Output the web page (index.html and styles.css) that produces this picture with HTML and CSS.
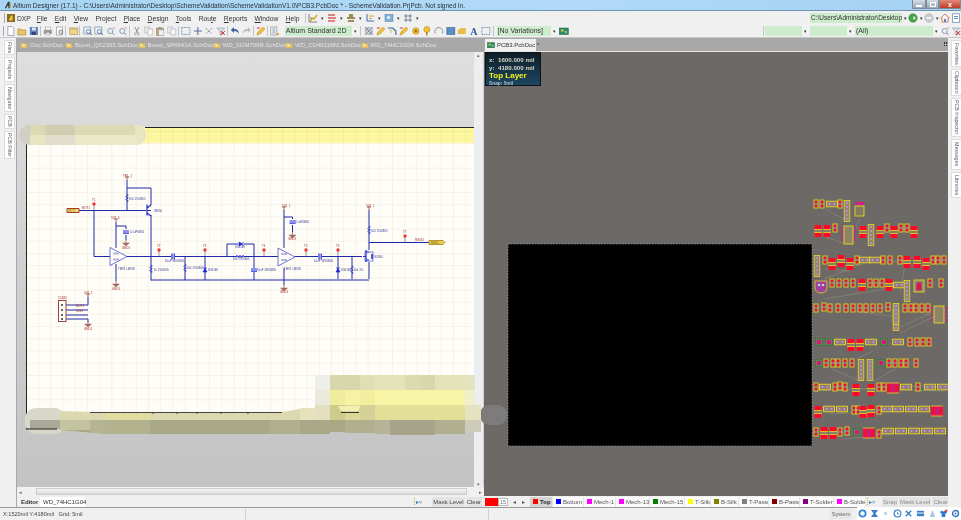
FILE: index.html
```html
<!DOCTYPE html>
<html lang="en">

<head>
  <meta charset="UTF-8">
  <meta name="viewport" content="width=device-width, initial-scale=1.0">
  <title>Altium Designer</title>
  <link rel="stylesheet" href="styles.css">
</head>

<body>
  <svg class="sprites" width="0" height="0">
    <defs>
      <!-- toolbar icons, 10x10 -->
      <symbol id="i-doc" viewBox="0 0 10 10"><path d="M2 .5h4l2 2v7H2z" fill="#fff" stroke="#8a9bb0" stroke-width=".8"/></symbol>
      <symbol id="i-open" viewBox="0 0 10 10"><path d="M1 3h3l1 1h4v5H1z" fill="#e9c46a" stroke="#a5822c" stroke-width=".6"/></symbol>
      <symbol id="i-save" viewBox="0 0 10 10"><rect x="1" y="1" width="8" height="8" fill="#5a7fb5"/><rect x="3" y="1.5" width="4" height="3" fill="#dfe8f3"/><rect x="3" y="6" width="4" height="3" fill="#2d4a78"/></symbol>
      <symbol id="i-print" viewBox="0 0 10 10"><rect x="2.5" y="1" width="5" height="3" fill="#fff" stroke="#888" stroke-width=".5"/><rect x="1" y="4" width="8" height="4" fill="#9a9a9a"/><rect x="3" y="6.5" width="4" height="2.5" fill="#eee" stroke="#888" stroke-width=".4"/></symbol>
      <symbol id="i-prev" viewBox="0 0 10 10"><rect x="1.5" y="1" width="6" height="8" fill="#fff" stroke="#888" stroke-width=".6"/><circle cx="6" cy="6" r="2" fill="#cfe3f7" stroke="#456" stroke-width=".6"/></symbol>
      <symbol id="i-folder" viewBox="0 0 10 10"><rect x="1" y="2" width="8" height="6.5" fill="#f2d68a" stroke="#9c8a55" stroke-width=".6"/><rect x="1" y="2" width="8" height="1.6" fill="#c9b578"/></symbol>
      <symbol id="i-zoom" viewBox="0 0 10 10"><rect x="1" y="1" width="7" height="7" fill="#e8f0fa" stroke="#7c8da5" stroke-width=".7"/><circle cx="5.5" cy="5.5" r="2" fill="none" stroke="#4b6a94" stroke-width=".7"/><path d="M7 7l2 2" stroke="#4b6a94"/></symbol>
      <symbol id="i-lens" viewBox="0 0 10 10"><circle cx="4.5" cy="5" r="2.6" fill="#e6eef7" stroke="#7c8da5" stroke-width=".8"/><path d="M6.5 7l2 2" stroke="#7c8da5"/><path d="M7 1l2 2" stroke="#c66" stroke-width=".7"/></symbol>
      <symbol id="i-cut" viewBox="0 0 10 10"><path d="M3 1l3 6M7 1L4 7" stroke="#8a94a3" fill="none"/><circle cx="3.4" cy="8" r="1" fill="none" stroke="#8a94a3" stroke-width=".6"/><circle cx="6.6" cy="8" r="1" fill="none" stroke="#8a94a3" stroke-width=".6"/></symbol>
      <symbol id="i-copy" viewBox="0 0 10 10"><rect x="1" y="1" width="5" height="6" fill="#eee" stroke="#aaa" stroke-width=".6"/><rect x="4" y="3" width="5" height="6" fill="#f7f7f7" stroke="#aaa" stroke-width=".6"/></symbol>
      <symbol id="i-paste" viewBox="0 0 10 10"><rect x="1.5" y="2" width="7" height="7.5" fill="#c4a877" stroke="#8d7a55" stroke-width=".5"/><rect x="3.5" y="1" width="3" height="2" fill="#999"/><rect x="4" y="4" width="5" height="5.5" fill="#eef2f8" stroke="#8997ac" stroke-width=".4"/></symbol>
      <symbol id="i-select" viewBox="0 0 10 10"><rect x="1" y="1.5" width="8" height="7" fill="none" stroke="#5b7da8" stroke-width=".8" stroke-dasharray="1.2 .6"/></symbol>
      <symbol id="i-move" viewBox="0 0 10 10"><path d="M5 1v8M1 5h8" stroke="#4d6f9c" fill="none"/></symbol>
      <symbol id="i-dashx" viewBox="0 0 10 10"><path d="M2 2l6 6M8 2L2 8" stroke="#7f8da0" stroke-dasharray="1.4 .7" fill="none"/></symbol>
      <symbol id="i-clear" viewBox="0 0 10 10"><path d="M1 2l8 0-3 3v4H4V5z" fill="#d7dfe9" stroke="#7a8899" stroke-width=".5"/><path d="M5 5l4 4M9 5L5 9" stroke="#c22" stroke-width="1"/></symbol>
      <symbol id="i-undo" viewBox="0 0 10 10"><path d="M1 4l3-3v2c3 0 5 1 5 5-1-2-2-3-5-3v2z" fill="#3d64a1"/></symbol>
      <symbol id="i-redo" viewBox="0 0 10 10"><path d="M9 4L6 1v2C3 3 1 4 1 8c1-2 2-3 5-3v2z" fill="#b9c0c9"/></symbol>
      <symbol id="i-pen" viewBox="0 0 10 10"><path d="M1 9l1-3 5-5 2 2-5 5z" fill="#f2c230" stroke="#a8801a" stroke-width=".5"/><path d="M1 2h3" stroke="#c33"/></symbol>
      <symbol id="i-chip" viewBox="0 0 10 10"><rect x="1" y="1" width="6" height="8" fill="#fff" stroke="#777" stroke-width=".6"/><path d="M2.500 3h3M2.500 5h3M2.500 7h3" stroke="#345d96" stroke-width=".7"/><path d="M7 7h2v2H7z" fill="#d9a520"/></symbol>
      <symbol id="i-hatch" viewBox="0 0 10 10"><rect x="1" y="1" width="8" height="8" fill="#c6ccd6"/><path d="M1 5l4-4M1 9l8-8M5 9l4-4M1 1l8 8" stroke="#5d6b80" stroke-width=".6"/></symbol>
      <symbol id="i-route" viewBox="0 0 10 10"><path d="M1 2h5l3 3v4" stroke="#2f6fb3" stroke-width="1.2" fill="none"/><path d="M4 2v5" stroke="#e4b72d" stroke-width="1"/></symbol>
      <symbol id="i-via" viewBox="0 0 10 10"><circle cx="5" cy="5" r="3.200" fill="#f0bb26" stroke="#a9801d" stroke-width=".5"/><circle cx="5" cy="5" r="1.200" fill="#8c6a18"/></symbol>
      <symbol id="i-pin" viewBox="0 0 10 10"><circle cx="5" cy="3.500" r="3" fill="#f0c12e" stroke="#a9801d" stroke-width=".5"/><rect x="4.300" y="6" width="1.400" height="3.500" fill="#a9801d"/></symbol>
      <symbol id="i-arc" viewBox="0 0 10 10"><path d="M1.500 7.500a4 4 0 1 1 7 0" fill="none" stroke="#7d8794" stroke-width=".9"/></symbol>
      <symbol id="i-fill" viewBox="0 0 10 10"><rect x="1" y="1.500" width="8" height="7" fill="#5c8cc4" stroke="#3c5f8b" stroke-width=".6"/></symbol>
      <symbol id="i-poly" viewBox="0 0 10 10"><path d="M1 8V4l3-2h5v6z" fill="#e8bd4a"/></symbol>
      <symbol id="i-chart" viewBox="0 0 10 10"><path d="M1 1v8h8" stroke="#555" fill="none" stroke-width=".7"/><path d="M2 8l3-3 1 1 3-4" stroke="#d9a11a" stroke-width="1.300" fill="none"/><path d="M2 4l2 2" stroke="#3d9a3d"/></symbol>
      <symbol id="i-bars" viewBox="0 0 10 10"><path d="M1 2h7M1 5h8M1 8h7" stroke="#d7625e" stroke-width="1.400"/></symbol>
      <symbol id="i-stack" viewBox="0 0 10 10"><path d="M3 1h4v3h2v2H1V4h2zM2 7h6v2H2z" fill="#9c8b55"/></symbol>
      <symbol id="i-angle" viewBox="0 0 10 10"><path d="M2 1v7h7" stroke="#3d6ea8" stroke-width="1" fill="none"/><path d="M4 3h5" stroke="#e3a72a"/><path d="M4 5.500h3" stroke="#d96"/></symbol>
      <symbol id="i-box" viewBox="0 0 10 10"><rect x="1" y="1.500" width="8" height="7" fill="#7fb2dc" stroke="#4d7ba6" stroke-width=".5"/><rect x="3" y="3.500" width="3" height="2" fill="#fff"/></symbol>
      <symbol id="i-grid" viewBox="0 0 10 10"><path d="M3 1v8M7 1v8M1 3h8M1 7h8" stroke="#6b7b90" stroke-width=".9"/></symbol>
      <symbol id="i-board" viewBox="0 0 10 10"><rect x=".5" y="2" width="9" height="6.500" fill="#2c8a5f" stroke="#1c5f40" stroke-width=".5"/><rect x="2" y="3.500" width="3" height="2" fill="#d7c24a"/><rect x="6" y="5" width="2" height="2" fill="#8fd0ad"/></symbol>
      <symbol id="i-go" viewBox="0 0 10 10"><circle cx="5" cy="5" r="4.200" fill="#46a546" stroke="#2c7a2c" stroke-width=".5"/><path d="M2.500 5h3V3l2.200 2-2.200 2V5" fill="#fff"/></symbol>
      <symbol id="i-stop" viewBox="0 0 10 10"><circle cx="5" cy="5" r="4.200" fill="#c9cdd2" stroke="#9aa0a8" stroke-width=".5"/><rect x="2.500" y="4" width="5" height="2" fill="#eef0f2"/></symbol>
      <symbol id="i-home" viewBox="0 0 10 10"><path d="M5 1L.8 5H2v4h6V5h1.200z" fill="#f5f5f5" stroke="#d2603a" stroke-width=".8"/><rect x="4" y="6" width="2" height="3" fill="#4f86c6"/></symbol>
      <symbol id="i-page" viewBox="0 0 10 10"><rect x="1.500" y=".8" width="7" height="8.500" fill="#fff" stroke="#5b87b8" stroke-width=".7"/><path d="M3 3.500h4M3 5.500h4" stroke="#4577ad" stroke-width=".8"/></symbol>
      <symbol id="i-sch" viewBox="0 0 10 10"><path d="M1 2.500h3l1 1h4v5H1z" fill="#e8c45a"/><rect x="3" y="4.500" width="3" height="2" fill="#fff4c4"/></symbol>

      <!-- schematic parts -->
      <g id="probe"><path d="M0 0v6" stroke="#8a7a88" stroke-width=".8"/><circle cx="0" cy="0" r="1.700" fill="#e8383a"/></g>
      <g id="gnd"><path d="M0-3V0" stroke="#9c5a50" stroke-width=".8"/><path d="M-3.500 0h7L0 3z" fill="#a86a60" stroke="#8c5a50" stroke-width=".4"/></g>
      <path id="pwr" d="M0 2v-3M-2-1h4" stroke="#a0564c" stroke-width=".9" fill="none"/>
      <path id="resv" d="M0-4l1.300 1-2.600 1.500 2.600 1.500-2.600 1.500 2.600 1.500-1.300 1" stroke="#1c28b0" stroke-width=".8" fill="#fffdf8"/>
      <path id="resh" d="M-4 0l1-1.300 1.500 2.600 1.500-2.600 1.500 2.600 1.500-2.600 1 1.300" stroke="#1c28b0" stroke-width=".8" fill="#fffdf8"/>
      <g id="capv"><rect x="-3" y="-2" width="6" height="4" fill="#fffdf8"/><path d="M-3-1h6M-3 1.200h6" stroke="#1c28e0" stroke-width="1.200"/></g>
      <g id="caph"><rect x="-2" y="-3" width="4" height="6" fill="#fffdf8"/><path d="M-1-3v6M1.200-3v6" stroke="#1c28e0" stroke-width="1.200"/></g>
      <path id="diodev" d="M-2 2h4L0-1.500zM-2-2h4" fill="#1c28d0" stroke="#1c28d0" stroke-width=".7"/>
      <path id="diodeh" d="M-2-2v4L1.500 0zM2-2v4" fill="#1c28d0" stroke="#1c28d0" stroke-width=".7"/>
      <g id="opamp"><path d="M0 0L17 9 0 18z" fill="#fffdf8" stroke="#4a50d0" stroke-width=".8"/><rect x="3" y="5" width="6" height="2" fill="#b4b4dc"/><rect x="3" y="11" width="6" height="2" fill="#b4b4dc"/></g>

      <!-- footprints -->
      <g id="r"><rect x="-2" y="-4" width="4" height="8" fill="none" stroke="#e8d820" stroke-width=".9"/><rect x="-1.300" y="-3.300" width="2.600" height="2.200" fill="#f01030"/><rect x="-1.300" y="1.100" width="2.600" height="2.200" fill="#f01030"/><rect x="-1" y="-1" width="2" height="2" fill="#b060a0"/></g>
      <g id="big"><rect x="-4" y="-6" width="8" height="12" fill="#858268"/><rect x="-3.500" y="-6" width="7" height="4.500" fill="#fa0a28"/><rect x="-3.500" y="1.500" width="7" height="4.500" fill="#fa0a28"/><path d="M-4-1.500h8M-4 1.500h8" stroke="#e8d820" stroke-width=".8"/></g>
      <g id="wide"><rect x="-6" y="-5" width="12" height="10" fill="#f01040"/><rect x="-1.500" y="-5" width="3" height="10" fill="#c02080"/><path d="M-6-5h12M-6 5h12" stroke="#e8d820" stroke-width=".8"/></g>
      <g id="h"><rect x="-5.500" y="-2.800" width="11" height="5.600" fill="#8f7f78" stroke="#e8d820" stroke-width=".9"/><circle cx="-2.500" cy="0" r="1.100" fill="#9cc" stroke="#e040c0" stroke-width=".4"/><circle cx="2.500" cy="0" r="1.100" fill="#9cc" stroke="#e040c0" stroke-width=".4"/></g>
      <g id="g"><rect x="-3.500" y="-3.500" width="7" height="7" fill="#5a8a50" stroke="#2a7030" stroke-width=".5"/><rect x="-2" y="-2" width="4" height="4" fill="#e01080"/></g>
      <g id="s"><rect x="-2.800" y="-10.500" width="5.600" height="21" fill="#8f8a78" stroke="#e8d820" stroke-width=".8"/><circle cy="-8" r="1.100" fill="#a8c8c8" stroke="#d040b0" stroke-width=".4"/><circle cy="-4" r="1.100" fill="#a8c8c8" stroke="#d040b0" stroke-width=".4"/><circle cy="0" r="1.100" fill="#a8c8c8" stroke="#d040b0" stroke-width=".4"/><circle cy="4" r="1.100" fill="#a8c8c8" stroke="#d040b0" stroke-width=".4"/><circle cy="8" r="1.100" fill="#a8c8c8" stroke="#d040b0" stroke-width=".4"/></g>

      <pattern id="sheet-grid" x="26" y="131" width="12.200" height="12.200" patternUnits="userSpaceOnUse">
        <path d="M12.200 0H0V12.200" fill="none" stroke="#ebe5d4" stroke-width=".9"/>
      </pattern>
      <pattern id="band-grid" x="26" y="131" width="12.200" height="12.200" patternUnits="userSpaceOnUse">
        <path d="M12.200 0H0V12.200" fill="none" stroke="#ece486" stroke-width=".9"/>
      </pattern>
    </defs>
  </svg>

  <div class="app">
    <header class="titlebar">
      <svg class="title-logo" viewBox="0 0 10 10"><path d="M1 9L5 1h2v8H5.500V6H4L3 9z" fill="#333"/><path d="M8 2v7" stroke="#c79a1e"/></svg>
      <span class="title-text">Altium Designer (17.1) - C:\Users\Administrator\Desktop\SchemeValidation\SchemeValidationV1.0\PCB3.PcbDoc * - SchemeValidation.PrjPcb. Not signed in.</span>
      <div class="win-buttons">
        <span class="win-btn"><i class="win-min"></i></span>
        <span class="win-btn win-restore"><i class="win-max"></i></span>
        <span class="win-btn win-close">x</span>
      </div>
    </header>

    <nav class="menubar">
      <span class="grip"></span>
      <svg class="dxp-logo" viewBox="0 0 10 10"><rect width="10" height="10" fill="#8a6a1e"/><path d="M2 8L5 2h2v6" fill="#f0c43a"/></svg>
      <span class="menu-item dxp">DXP</span>
      <span class="menu-item"><u>F</u>ile</span>
      <span class="menu-item"><u>E</u>dit</span>
      <span class="menu-item"><u>V</u>iew</span>
      <span class="menu-item">Pro<u>j</u>ect</span>
      <span class="menu-item"><u>P</u>lace</span>
      <span class="menu-item"><u>D</u>esign</span>
      <span class="menu-item"><u>T</u>ools</span>
      <span class="menu-item">Rou<u>t</u>e</span>
      <span class="menu-item"><u>R</u>eports</span>
      <span class="menu-item"><u>W</u>indow</span>
      <span class="menu-item"><u>H</u>elp</span>
      <div class="view-tools">
        <span class="sep"></span>
        <svg class="ico"><use href="#i-chart"/></svg><span class="drop">▾</span>
        <svg class="ico"><use href="#i-bars"/></svg><span class="drop">▾</span>
        <svg class="ico"><use href="#i-stack"/></svg><span class="drop">▾</span>
        <svg class="ico"><use href="#i-angle"/></svg><span class="drop">▾</span>
        <svg class="ico"><use href="#i-box"/></svg><span class="drop">▾</span>
        <svg class="ico"><use href="#i-grid"/></svg><span class="drop">▾</span>
      </div>
      <div class="nav-tools">
        <span class="combo combo-path">C:\Users\Administrator\Desktop</span>
        <span class="drop">▾</span>
        <svg class="ico"><use href="#i-go"/></svg><span class="drop">▾</span>
        <svg class="ico"><use href="#i-stop"/></svg><span class="drop">▾</span>
        <svg class="ico"><use href="#i-home"/></svg>
        <svg class="ico ico-last"><use href="#i-page"/></svg>
      </div>
    </nav>

    <div class="toolbar">
      <span class="grip"></span>
      <svg class="ico"><use href="#i-doc"/></svg>
      <svg class="ico"><use href="#i-open"/></svg>
      <svg class="ico"><use href="#i-save"/></svg>
      <span class="sep"></span>
      <svg class="ico"><use href="#i-print"/></svg>
      <svg class="ico"><use href="#i-prev"/></svg>
      <span class="sep"></span>
      <svg class="ico"><use href="#i-folder"/></svg>
      <span class="sep"></span>
      <svg class="ico"><use href="#i-zoom"/></svg>
      <svg class="ico"><use href="#i-zoom"/></svg>
      <svg class="ico"><use href="#i-lens"/></svg>
      <svg class="ico"><use href="#i-lens"/></svg>
      <span class="sep"></span>
      <svg class="ico"><use href="#i-cut"/></svg>
      <svg class="ico"><use href="#i-copy"/></svg>
      <svg class="ico"><use href="#i-paste"/></svg>
      <svg class="ico"><use href="#i-copy"/></svg>
      <span class="sep"></span>
      <svg class="ico"><use href="#i-select"/></svg>
      <svg class="ico"><use href="#i-move"/></svg>
      <svg class="ico"><use href="#i-dashx"/></svg>
      <svg class="ico"><use href="#i-clear"/></svg>
      <span class="sep"></span>
      <svg class="ico"><use href="#i-undo"/></svg>
      <svg class="ico"><use href="#i-redo"/></svg>
      <span class="sep"></span>
      <svg class="ico"><use href="#i-pen"/></svg>
      <span class="sep"></span>
      <svg class="ico"><use href="#i-chip"/></svg>
      <span class="combo combo-view">Altium Standard 2D</span>
      <span class="combo-arrow">▾</span>
      <span class="sep sep-wide"></span>
      <svg class="ico"><use href="#i-hatch"/></svg>
      <svg class="ico"><use href="#i-pen"/></svg>
      <svg class="ico"><use href="#i-route"/></svg>
      <svg class="ico"><use href="#i-pen"/></svg>
      <svg class="ico"><use href="#i-via"/></svg>
      <svg class="ico"><use href="#i-pin"/></svg>
      <svg class="ico"><use href="#i-arc"/></svg>
      <svg class="ico"><use href="#i-fill"/></svg>
      <svg class="ico"><use href="#i-poly"/></svg>
      <span class="glyph-a">A</span>
      <svg class="ico"><use href="#i-select"/></svg>
      <span class="sep sep-wide"></span>
      <span class="combo combo-variant">[No Variations]</span>
      <span class="combo-arrow">▾</span>
      <svg class="ico"><use href="#i-board"/></svg>
      <div class="filter-tools">
        <span class="sep"></span>
        <span class="combo combo-filter"></span><span class="combo-arrow combo-gap">▾</span>
        <span class="combo combo-filter"></span><span class="combo-arrow combo-gap">▾</span>
        <span class="combo combo-all">(All)</span><span class="combo-arrow">▾</span>
        <svg class="ico"><use href="#i-lens"/></svg>
        <svg class="ico"><use href="#i-clear"/></svg>
      </div>
    </div>

    <main class="workspace">
      <aside class="side-tabs side-left">
        <span class="side-tab tab-files">Files</span>
        <span class="side-tab tab-projects">Projects</span>
        <span class="side-tab tab-nav">Navigator</span>
        <span class="side-tab tab-pcb">PCB</span>
        <span class="side-tab tab-filter">PCB Filter</span>
      </aside>

      <section class="pane pane-sch">
        <div class="doc-tabs">
          <span class="doc-tab"><svg class="ico-sm"><use href="#i-sch"/></svg>Osc.SchDoc</span>
          <span class="doc-tab"><svg class="ico-sm"><use href="#i-sch"/></svg>Boost_QX2303.SchDoc</span>
          <span class="doc-tab"><svg class="ico-sm"><use href="#i-sch"/></svg>Boost_SP6641A.SchDoc</span>
          <span class="doc-tab"><svg class="ico-sm"><use href="#i-sch"/></svg>WD_SGM706R.SchDoc</span>
          <span class="doc-tab"><svg class="ico-sm"><use href="#i-sch"/></svg>WD_CD4011BM.SchDoc</span>
          <span class="doc-tab"><svg class="ico-sm"><use href="#i-sch"/></svg>WD_74HC1G04.SchDoc</span>
        </div>
        <div class="sch-body">
          <svg class="sch-canvas" viewBox="17 52 457 436">
            <rect x="26" y="127" width="448" height="16" fill="#fdf7a2"/>
            <rect x="26" y="127" width="448" height="16" fill="url(#band-grid)"/>
            <rect x="26" y="143" width="448" height="269" fill="#fffdf8"/>
            <rect x="26" y="143" width="448" height="269" fill="url(#sheet-grid)"/>
            <rect x="26" y="412" width="70" height="17" fill="#fffdf8"/>
            <path d="M145 127.500H474" stroke="#222" stroke-width="1"/>
            <path d="M26.500 143V429H57" stroke="#222" stroke-width="1" fill="none"/>

            <!-- wires -->
            <g class="wires">
              <path d="M79 210.500H146M94 210.500V256.500H110"/>
              <path d="M127 180V210.500M127 188H151V205M151 215V280.500"/>
              <path d="M116 222V248M116 226H126V229M126 235V240M116 264V281"/>
              <path d="M124 256.500H227M227 256.500V244H238M244 244H254V256.500M227 256.500H254"/>
              <path d="M151 280H369M185 256.500V280M205 256.500V280M254 256.500V280"/>
              <path d="M254 256.500H278"/>
              <path d="M284 210V248M284 217H292.500V219M292.500 225V232M284 268V285"/>
              <path d="M295 256.500H362M338 256.500V279M352 256.500V279"/>
              <path d="M369 210V250M369 262V279M369 242.500H429"/>
              <path d="M66 305H88V297M66 310H88M66 315H88M66 319H88V322"/>
            </g>

            <use href="#probe" x="94" y="204"/>
            <use href="#probe" x="159" y="250"/>
            <use href="#probe" x="205" y="250"/>
            <use href="#probe" x="264" y="250"/>
            <use href="#probe" x="306" y="250"/>
            <use href="#probe" x="338" y="250"/>
            <use href="#probe" x="405" y="236"/>

            <use href="#pwr" x="127" y="178"/>
            <use href="#pwr" x="116" y="220"/>
            <use href="#pwr" x="284" y="208"/>
            <use href="#pwr" x="369" y="208"/>
            <use href="#pwr" x="88" y="295"/>

            <use href="#gnd" x="126" y="243"/>
            <use href="#gnd" x="116" y="284"/>
            <use href="#gnd" x="292.500" y="235"/>
            <use href="#gnd" x="284" y="288"/>
            <use href="#gnd" x="88" y="324"/>

            <use href="#resv" x="127" y="198"/>
            <use href="#resv" x="151" y="269"/>
            <use href="#resv" x="185" y="268"/>
            <use href="#resv" x="352" y="270"/>
            <use href="#resv" x="369" y="230"/>
            <use href="#resh" x="240" y="256.500"/>
            <use href="#capv" x="126" y="232"/>
            <use href="#capv" x="254" y="270"/>
            <use href="#capv" x="292.500" y="222"/>
            <use href="#caph" x="173" y="256.500"/>
            <use href="#caph" x="320" y="256.500"/>
            <use href="#diodev" x="205" y="270"/>
            <use href="#diodev" x="338" y="270"/>
            <use href="#diodeh" x="241" y="244"/>

            <use href="#opamp" x="110" y="247.500"/>
            <use href="#opamp" x="278" y="248"/>

            <!-- transistor and mosfet -->
            <path d="M147 204.500v11M147 210.500H151M147 208L151 205M147 213L151 216" stroke="#1c28d0" stroke-width="1.200" fill="none"/>
            <path d="M366 250v12M363 256.500H366M366 252h3M366 260h3" stroke="#1c28d0" stroke-width="1.200" fill="none"/>
            <rect x="365" y="252" width="8" height="9" fill="none" stroke="#4a50d0" stroke-width=".7"/>
            <path d="M372 254v5" stroke="#1c28d0" stroke-width="1.500"/>

            <!-- ports and connector -->
            <path d="M67 208.500H79V212.500H67Z" fill="#efe06a" stroke="#a83a2a" stroke-width="1"/>
            <path d="M429 240.500H443L445 242.500 443 244.500H429Z" fill="#e8cd50" stroke="#b08a2a" stroke-width=".9"/>
            <rect x="58.500" y="300.500" width="7.500" height="21" fill="#fffdf8" stroke="#a0433a" stroke-width="1"/>
            <g fill="#333"><circle cx="62" cy="305" r="1"/><circle cx="62" cy="310" r="1"/><circle cx="62" cy="315" r="1"/><circle cx="62" cy="319" r="1"/></g>

            <!-- labels -->
            <g class="net-red">
              <text x="123" y="177">TR1_1</text>
              <text x="111" y="219">5V1_5</text>
              <text x="282" y="207">5V1_1</text>
              <text x="366" y="207">5V1_1</text>
              <text x="84" y="294">5V1_1</text>
              <text x="82" y="209">NOT1</text>
              <text x="415" y="241">NSIG1</text>
              <text x="92" y="201">T1</text>
              <text x="157" y="247">T2</text>
              <text x="203" y="247">T3</text>
              <text x="262" y="247">T4</text>
              <text x="304" y="247">T5</text>
              <text x="336" y="247">T6</text>
              <text x="403" y="233">T7</text>
              <text x="122" y="249">GND1</text>
              <text x="112" y="290">GND1</text>
              <text x="288" y="240">GND1</text>
              <text x="280" y="293">GND1</text>
              <text x="84" y="330">GND1</text>
              <text x="58" y="299">COM4</text>
              <text x="76" y="307">NOT1</text>
              <text x="76" y="312">SIG1</text>
            </g>
            <g class="net-blue">
              <text x="129" y="200">100 1%/0805</text>
              <text x="154" y="212">S8050</text>
              <text x="130" y="233">0.1uF/0805</text>
              <text x="118" y="270">TMV1 LM358</text>
              <text x="154" y="271">1k 1%/0805</text>
              <text x="165" y="262">10uF 16V/0805</text>
              <text x="187" y="269">10k 1%/0805</text>
              <text x="208" y="271">1N4148</text>
              <text x="235" y="248">1N4148</text>
              <text x="233" y="260">10k 1%/0805</text>
              <text x="257" y="271">10uF 16V/0805</text>
              <text x="295" y="223">0.1uF/0805</text>
              <text x="284" y="270">TMV1 LM358</text>
              <text x="314" y="262">10uF 16V/0805</text>
              <text x="341" y="271">1N4148</text>
              <text x="354" y="271">10k 1%</text>
              <text x="371" y="232">100 1%/0805</text>
              <text x="374" y="258">Si2300</text>
            </g>
            <text class="port-text" x="68.500" y="211.800">NOT1</text>
            <text class="port-text" x="431" y="243.800">NSIG1</text>
          </svg>
          <div class="scroll-v"><span class="arr">▴</span><span class="arr">▾</span></div>
        </div>
        <div class="scroll-h"><span class="arr">◂</span><span class="thumb"></span><span class="arr">▸</span></div>
        <div class="editor-bar">
          <span class="editor-label">Editor</span>
          <span class="editor-tab">WD_74HC1G04</span>
          <span class="bar-right">
            <span class="filter-icon">▸▿</span>
            <span class="bar-btn">Mask Level</span>
            <span class="bar-btn">Clear</span>
          </span>
        </div>
      </section>

      <section class="pane pane-pcb">
        <div class="doc-tabs doc-tabs-pcb">
          <span class="doc-tab doc-tab-on"><svg class="ico-sm"><use href="#i-board"/></svg>PCB3.PcbDoc *</span>
          <span class="pin-dots">⠿</span>
        </div>
        <div class="pcb-body">
          <svg class="pcb-canvas" viewBox="484 53 464 444">
            <rect x="508" y="245" width="304" height="202" fill="#000" stroke="#8a8a8a" stroke-width=".8" stroke-dasharray="1.500 1.500"/>

            <g class="ratsnest">
              <path d="M826 210L847 222M860 220L846 244M826 238L846 245M856 228L872 240M825 270L850 272M860 263L946 262M824 280L870 262"/>
              <path d="M855 312L896 318M900 328L940 310M900 334L945 312M824 300L885 290M905 265L900 295M911 310L945 322"/>
              <path d="M832 370L860 382M895 370L874 382M873 352L856 360M850 390L945 392M830 415L930 410M845 440L925 432M815 392L935 386"/>
            </g>

            <use href="#r" x="816" y="205"/><use href="#r" x="822" y="205"/><use href="#h" x="832" y="205"/><use href="#r" x="840" y="205"/><use href="#s" x="847" y="212"/>
            <rect x="855" y="207" width="9" height="10" fill="#7f7a60" stroke="#e8d820" stroke-width=".9"/><rect x="855" y="203" width="9" height="3" fill="#d0208a"/>

            <use href="#big" x="818" y="232"/><use href="#big" x="827" y="232"/><use href="#r" x="835" y="229"/>
            <rect x="844" y="227" width="9" height="18" fill="#8d8468" stroke="#e8d820" stroke-width=".9"/><path d="M843 229h-2M843 232h-2M843 235h-2M843 238h-2M843 241h-2M854 229h2M854 232h2M854 235h2M854 238h2M854 241h2" stroke="#e01090" stroke-width="1.500"/>
            <use href="#big" x="863" y="233"/><use href="#s" x="871" y="236"/><use href="#big" x="880" y="233"/><use href="#r" x="887" y="229"/><use href="#big" x="894" y="233"/><use href="#r" x="901" y="229"/><use href="#r" x="907" y="229"/><use href="#big" x="914" y="233"/>

            <use href="#s" x="817" y="267"/><use href="#r" x="825" y="261"/><use href="#big" x="832" y="265"/><use href="#big" x="841" y="262"/><use href="#big" x="850" y="265"/><use href="#r" x="857" y="261"/><use href="#h" x="865" y="261"/><use href="#h" x="875" y="261"/><use href="#r" x="883" y="261"/><use href="#r" x="890" y="261"/><use href="#r" x="900" y="261"/><use href="#big" x="907" y="263"/><use href="#big" x="917" y="263"/><use href="#big" x="926" y="265"/><use href="#r" x="933" y="261"/><use href="#r" x="938" y="261"/><use href="#r" x="944" y="261"/>

            <path d="M815 282h12v7a6 5 0 0 1-12 0z" fill="#a0409a" stroke="#e8d820" stroke-width=".8"/><circle cx="819" cy="286" r="1.300" fill="#bcd"/><circle cx="823" cy="286" r="1.300" fill="#bcd"/>
            <use href="#r" x="832" y="284"/><use href="#r" x="839" y="284"/><use href="#r" x="846" y="284"/><use href="#r" x="853" y="284"/><use href="#big" x="862" y="286"/><use href="#r" x="870" y="284"/><use href="#r" x="876" y="284"/><use href="#r" x="882" y="284"/><use href="#big" x="889" y="286"/><use href="#h" x="899" y="286"/><use href="#s" x="907" y="292"/>
            <rect x="914" y="281" width="10" height="12" fill="#8d8468" stroke="#e8d820" stroke-width=".9"/><rect x="917" y="284" width="4" height="7" fill="#f01040" stroke="#a02090" stroke-width=".7"/>
            <use href="#r" x="930" y="284"/><use href="#r" x="941" y="284"/>

            <use href="#r" x="816" y="309"/><use href="#r" x="824" y="308"/><use href="#r" x="830" y="309"/><use href="#r" x="838" y="309"/><use href="#r" x="846" y="309"/><use href="#r" x="853" y="309"/><use href="#r" x="860" y="309"/><use href="#r" x="866" y="309"/><use href="#r" x="873" y="309"/><use href="#r" x="880" y="309"/><use href="#r" x="888" y="308"/><use href="#s" x="896" y="321"/><use href="#s" x="896" y="315"/><use href="#r" x="905" y="309"/><use href="#r" x="911" y="309"/><use href="#r" x="916" y="309"/><use href="#r" x="922" y="309"/><use href="#r" x="928" y="309"/>
            <rect x="934" y="307" width="10" height="17" fill="#8d8468" stroke="#e8d820" stroke-width=".9"/><path d="M933 309h-2M933 313h-2M933 317h-2M933 321h-2M945 309h2M945 313h2M945 317h2M945 321h2" stroke="#e01090" stroke-width="1.500"/>

            <use href="#g" x="819" y="343"/><use href="#g" x="829" y="343"/><use href="#h" x="840" y="343"/><use href="#big" x="851" y="346"/><use href="#big" x="860" y="346"/><use href="#h" x="871" y="343"/><use href="#g" x="884" y="343"/><use href="#h" x="898" y="343"/><use href="#r" x="910" y="343"/><use href="#r" x="917" y="343"/><use href="#r" x="923" y="343"/><use href="#r" x="929" y="343"/>

            <use href="#g" x="819" y="364"/><use href="#r" x="826" y="364"/><use href="#r" x="833" y="364"/><use href="#r" x="838" y="364"/><use href="#r" x="845" y="364"/><use href="#r" x="852" y="364"/><use href="#s" x="861" y="371"/><use href="#s" x="870" y="371"/><use href="#g" x="881" y="364"/><use href="#r" x="889" y="364"/><use href="#r" x="895" y="364"/><use href="#r" x="901" y="364"/><use href="#r" x="906" y="364"/><use href="#r" x="916" y="364"/>

            <use href="#r" x="816" y="388"/><use href="#h" x="825" y="388"/><use href="#r" x="835" y="388"/><use href="#r" x="840" y="387"/><use href="#r" x="845" y="388"/><use href="#big" x="856" y="391"/><use href="#big" x="871" y="391"/><use href="#r" x="879" y="388"/><use href="#r" x="884" y="388"/><use href="#wide" x="893" y="389"/><use href="#h" x="906" y="388"/><use href="#r" x="918" y="388"/><use href="#h" x="930" y="388"/><use href="#h" x="943" y="388"/>

            <use href="#big" x="818" y="413"/><use href="#h" x="829" y="410"/><use href="#h" x="842" y="410"/><use href="#r" x="854" y="411"/><use href="#r" x="858" y="411"/><use href="#big" x="863" y="413"/><use href="#big" x="871" y="412"/><use href="#r" x="879" y="411"/><use href="#h" x="887" y="410"/><use href="#h" x="898" y="410"/><use href="#h" x="911" y="410"/><use href="#h" x="924" y="410"/><use href="#wide" x="937" y="412"/>

            <use href="#r" x="816" y="433"/><use href="#big" x="824" y="434"/><use href="#big" x="833" y="434"/><use href="#r" x="840" y="433"/><use href="#r" x="847" y="432"/><use href="#g" x="857" y="433"/><use href="#wide" x="869" y="434"/><use href="#r" x="879" y="435"/><use href="#h" x="888" y="432"/><use href="#h" x="901" y="432"/><use href="#h" x="914" y="432"/><use href="#h" x="927" y="432"/><use href="#h" x="940" y="432"/>
          </svg>
          <div class="readout">
            <div class="readout-xy">x: &nbsp;1600.000 mil</div>
            <div class="readout-xy">y: &nbsp;4180.000 mil</div>
            <div class="readout-layer">Top Layer</div>
            <div class="readout-snap">Snap: 5mil</div>
          </div>
        </div>
        <div class="layer-bar">
          <span class="layer-swatch"></span><span class="layer-count">15</span>
          <span class="layer-nav layer-nav-first">◂</span><span class="layer-nav">▸</span>
          <span class="layer-tab layer-tab-on lw-23"><i class="dot c-top"></i>Top</span>
          <span class="layer-tab lw-31"><i class="dot c-bottom"></i>Bottom</span>
          <span class="layer-tab lw-32"><i class="dot c-mech"></i>Mech-1</span>
          <span class="layer-tab lw-34"><i class="dot c-mech"></i>Mech-13</span>
          <span class="layer-tab lw-35"><i class="dot c-mech15"></i>Mech-15</span>
          <span class="layer-tab lw-26"><i class="dot c-tsilk"></i>T-Silk</span>
          <span class="layer-tab lw-28"><i class="dot c-bsilk"></i>B-Silk</span>
          <span class="layer-tab lw-30"><i class="dot c-tpaste"></i>T-Paste</span>
          <span class="layer-tab lw-31"><i class="dot c-bpaste"></i>B-Paste</span>
          <span class="layer-tab lw-34"><i class="dot c-tsolder"></i>T-Solder</span>
          <span class="layer-tab lw-32"><i class="dot c-mech"></i>B-Solde</span>
          <span class="filter-icon filter-icon-pcb">▸▿</span>
          <span class="bar-btn bar-btn-dim">Snap</span>
          <span class="bar-btn bar-btn-dim">Mask Level</span>
          <span class="bar-btn bar-btn-dim">Clear</span>
        </div>
      </section>

      <aside class="side-tabs side-right">
        <span class="side-tab tab-fav">Favorites</span>
        <span class="side-tab tab-clip">Clipboard</span>
        <span class="side-tab tab-insp">PCB Inspector</span>
        <span class="side-tab tab-msg">Messages</span>
        <span class="side-tab tab-lib">Libraries</span>
      </aside>

      <!-- pixelated patches lying over both panes -->
      <svg class="mosaic" viewBox="0 0 961 470">
        <g transform="translate(0 -38)">
          <rect x="19" y="125" width="40" height="20" rx="10" fill="#cfcfc6"/>
          <rect x="120" y="125" width="26" height="20" rx="9" fill="#e8e6c2"/>
          <rect x="30" y="125" width="15" height="10" fill="#d9d9b4"/><rect x="45" y="125" width="30" height="10" fill="#cfceb0"/><rect x="75" y="125" width="60" height="10" fill="#dadab4"/>
          <rect x="30" y="135" width="15" height="10" fill="#e8e6c0"/><rect x="45" y="135" width="30" height="10" fill="#e0decb"/><rect x="75" y="135" width="60" height="10" fill="#ebe8c7"/>

          <rect x="25" y="408" width="40" height="26" rx="11" fill="#d8d8ca"/>
          <path d="M60 411L90 412H282L300 409H330V434L262 434 105 434 60 430Z" fill="#dcd9b0"/>
          <rect x="30" y="420" width="30" height="9" fill="#a9a99a"/>
          <path d="M60 420H330V434H105L60 430Z" fill="#a9a888"/>
          <rect x="60" y="420" width="30" height="10" fill="#c4c3a0"/><rect x="90" y="420" width="15" height="13" fill="#b5b495"/>
          <rect x="105" y="413" width="45" height="7" fill="#e2dd9e"/><rect x="105" y="420" width="45" height="14" fill="#b2b28e"/>
          <rect x="270" y="420" width="30" height="14" fill="#b0af90"/><rect x="300" y="408" width="15" height="12" fill="#e6e3bc"/>
          <path d="M90 412.500H282M153 412v2M177 412v2M197 412v2M221 412v2M248 412v2" stroke="#333" stroke-width=".9" fill="none"/>
          <path d="M57 429H26" stroke="#222" stroke-width="1"/>

          <rect x="315" y="375" width="15" height="15" fill="#efefe9"/><rect x="330" y="375" width="30" height="15" fill="#d8d6ab"/><rect x="360" y="375" width="15" height="15" fill="#e0dfb3"/><rect x="375" y="375" width="30" height="15" fill="#e4e3ba"/><rect x="405" y="375" width="15" height="15" fill="#dcdbb0"/><rect x="420" y="375" width="15" height="15" fill="#d9d8ad"/><rect x="435" y="375" width="30" height="15" fill="#e3e2b8"/><rect x="465" y="375" width="10" height="15" fill="#e6e4c0"/>
          <rect x="315" y="390" width="15" height="15" fill="#ebe9dc"/><rect x="330" y="390" width="15" height="15" fill="#f1ec9c"/><rect x="345" y="390" width="15" height="15" fill="#f6f1a4"/><rect x="360" y="390" width="15" height="15" fill="#f3ee9e"/><rect x="375" y="390" width="90" height="15" fill="#f8f4a6"/><rect x="465" y="390" width="10" height="15" fill="#f0eecb"/>
          <rect x="480" y="405" width="27" height="20" rx="9" fill="#7e7c7a"/>
          <rect x="315" y="405" width="15" height="15" fill="#e3e0c0"/><rect x="330" y="405" width="15" height="15" fill="#cdcc8c"/><rect x="345" y="405" width="15" height="15" fill="#dcd898"/><rect x="360" y="405" width="15" height="15" fill="#d4d298"/><rect x="375" y="405" width="90" height="15" fill="#e2df98"/><rect x="465" y="405" width="16" height="15" fill="#e5e3bf"/>
          <rect x="330" y="420" width="15" height="12" fill="#a9a884"/><rect x="345" y="420" width="30" height="13" fill="#b0af90"/><rect x="375" y="420" width="15" height="14" fill="#b5b496"/><rect x="390" y="420" width="45" height="15" fill="#a6a58c"/><rect x="435" y="420" width="30" height="14" fill="#b0af8f"/><rect x="465" y="420" width="16" height="12" fill="#cccbb9"/>
          <path d="M338 406H360L358 411H341Z" fill="#f5f0b0"/>
          <path d="M341 412.500H359" stroke="#222" stroke-width=".9"/>
        </g>
      </svg>
    </main>

    <footer class="statusbar">
      <span class="status-pos">X:1520mil Y:4180mil &nbsp; Grid: 5mil</span>
      <span class="status-div status-div-1"></span>
      <span class="status-div status-div-2"></span>
      <span class="status-system">System</span>
      <div class="tray">
        <svg class="tray-ico" viewBox="0 0 10 10"><circle cx="5" cy="5" r="4.500" fill="#3a86d8"/><circle cx="5" cy="5" r="2.500" fill="#fff"/></svg>
        <svg class="tray-ico" viewBox="0 0 10 10"><path d="M1 1h8L6 5l3 4H1l3-4z" fill="#3d7fc4"/></svg>
        <svg class="tray-ico" viewBox="0 0 10 10"><circle cx="5" cy="5" r="2" fill="#bcd6ee"/></svg>
        <svg class="tray-ico" viewBox="0 0 10 10"><circle cx="5" cy="5" r="3.800" fill="none" stroke="#2f78c8" stroke-width="1.200"/><path d="M5 3v2.500h2" stroke="#2f78c8" fill="none" stroke-width=".9"/></svg>
        <svg class="tray-ico" viewBox="0 0 10 10"><path d="M2 2l6 6M8 2L2 8" stroke="#2f78c8" stroke-width="1.500"/></svg>
        <svg class="tray-ico" viewBox="0 0 10 10"><rect x="1" y="2" width="8" height="6" fill="#3d7fc4"/><path d="M1 4.500h8" stroke="#fff"/></svg>
        <svg class="tray-ico" viewBox="0 0 10 10"><path d="M5 1L2 9h6z" fill="#a8c4e0"/></svg>
        <svg class="tray-ico" viewBox="0 0 10 10"><path d="M1 3l3-1 1 1 1-1 3 1-1 2H7v4H3V5H2z" fill="#2f78c8"/><circle cx="8" cy="2" r="1.500" fill="#e84a2a"/></svg>
        <svg class="tray-ico" viewBox="0 0 10 10"><circle cx="5" cy="5" r="3.300" fill="none" stroke="#2f78c8" stroke-width="1.600"/><circle cx="5" cy="5" r="1" fill="#2f78c8"/></svg>
      </div>
    </footer>
  </div>
</body>

</html>
```

FILE: styles.css
```css
* {
  box-sizing: border-box;
}

html,
body {
  margin: 0;
  width: 961px;
  height: 520px;
  overflow: hidden;
}

body {
  font-family: "Liberation Sans", Arial, sans-serif;
  font-size: 7px;
  color: #333;
  background: #f0f0f0;
}

.sprites {
  position: absolute;
}

.app {
  display: flex;
  flex-direction: column;
  width: 961px;
  height: 520px;
  filter: blur(0.4px);
}

/* title bar */
.titlebar {
  display: flex;
  align-items: center;
  height: 11px;
  padding-left: 4px;
  background: linear-gradient(90deg, #a8d4f3, #b0daf7 60%, #a4d2f2);
  border-bottom: 1px solid #6f93b3;
}

.title-logo {
  width: 8px;
  height: 8px;
  margin-right: 1px;
}

.title-text {
  font-size: 6.5px;
  color: #2a3138;
  white-space: nowrap;
}

.win-buttons {
  display: flex;
  margin-left: auto;
  height: 9px;
  align-self: flex-start;
}

.win-btn {
  display: flex;
  align-items: center;
  justify-content: center;
  width: 14px;
  background: linear-gradient(#d4dde6, #9aa6b2);
  border: 1px solid #7e8b98;
  border-top: none;
}

.win-restore {
  width: 13px;
}

.win-close {
  width: 22px;
  color: #fff;
  font-weight: bold;
  font-size: 7px;
  background: linear-gradient(#e08a78, #c03a2a);
}

.win-min {
  width: 6px;
  height: 2px;
  margin-top: 3px;
  background: #fff;
}

.win-max {
  width: 6px;
  height: 5px;
  border: 1px solid #fff;
}

/* menu and tool rows */
.menubar,
.toolbar {
  display: flex;
  align-items: center;
  background: #f0f0f0;
  white-space: nowrap;
}

.menubar {
  height: 14px;
  padding-left: 4px;
}

.toolbar {
  height: 13px;
  padding-left: 2.5px;
  border-bottom: 1px solid #c8c8c8;
}

.grip {
  width: 2px;
  height: 10px;
  border-left: 1px solid #a8a8a8;
  flex: none;
}

.dxp-logo {
  width: 8px;
  height: 8px;
  margin-left: 1px;
  margin-right: 2px;
}

.menu-item {
  margin-right: 7.3px;
  font-size: 6.7px;
  color: #333;
}

.menu-item.dxp {
  margin-right: 6px;
}

.ico {
  flex: none;
  width: 11.7px;
  height: 10px;
}

.ico-sm {
  flex: none;
  width: 8px;
  height: 8px;
  margin-right: 2px;
}

.sep {
  flex: none;
  width: 2.4px;
  height: 10px;
  border-left: 1px solid #c4c4c4;
}

.sep-wide {
  width: 1px;
  margin: 0 1.5px 0 1.65px;
}

.drop {
  flex: none;
  width: 6px;
  font-size: 5px;
  text-align: center;
  color: #333;
}

.view-tools {
  display: flex;
  align-items: center;
  margin-left: -2px;
}

.view-tools .ico {
  width: 12px;
}

.view-tools .drop {
  width: 7px;
}

.nav-tools {
  display: flex;
  align-items: center;
  margin-left: auto;
}

.nav-tools .ico {
  width: 10px;
}

.nav-tools .ico-last {
  margin-left: 1px;
}

.filter-tools {
  display: flex;
  align-items: center;
  margin-left: auto;
}

.filter-tools .ico {
  width: 10.5px;
}

.combo {
  display: block;
  flex: none;
  height: 10px;
  line-height: 10px;
  padding-left: 1px;
  background: #cdebcd;
  font-size: 7px;
  overflow: hidden;
}

.combo-path {
  width: 92px;
  font-size: 6.5px;
}

.combo-view {
  width: 67px;
  margin-left: 4px;
}

.combo-variant {
  width: 54px;
  margin-left: 1px;
}

.combo-filter {
  width: 37px;
}

.combo-all {
  width: 78px;
}

.combo-arrow {
  flex: none;
  width: 7px;
  font-size: 5px;
  text-align: center;
  background: #f4f4f4;
}

.combo-gap {
  margin-right: 1px;
}

.glyph-a {
  flex: none;
  width: 11.7px;
  font-family: "Liberation Serif", serif;
  font-size: 10px;
  font-weight: bold;
  color: #2a5a9c;
  text-align: center;
}

/* work area */
.workspace {
  position: relative;
  display: flex;
  height: 470px;
  background: #f0f0f0;
  border-bottom: 1px solid #9a9a9a;
}

.mosaic {
  position: absolute;
  left: 0;
  top: 0;
  width: 961px;
  height: 470px;
  pointer-events: none;
}

.side-tabs {
  position: relative;
  flex: none;
  background: #f0f0f0;
}

.side-left {
  width: 17px;
  border-right: 1px solid #a8a8a8;
}

.side-right {
  width: 13px;
}

.side-tab {
  position: absolute;
  display: flex;
  align-items: center;
  justify-content: center;
  writing-mode: vertical-rl;
  background: #fff;
  font-size: 5.3px;
  color: #5a5a6a;
  border: 1px solid #dcdcdc;
}

.side-left .side-tab {
  left: 4px;
  width: 11px;
}

.side-right .side-tab {
  left: 3px;
  width: 10px;
  border-right: none;
}

.tab-files { top: 2px; height: 15px; }
.tab-projects { top: 19px; height: 25px; }
.tab-nav { top: 46px; height: 28px; }
.tab-pcb { top: 76px; height: 15px; }
.tab-filter { top: 93px; height: 28px; }
.tab-fav { top: 2px; height: 27px; }
.tab-clip { top: 31px; height: 27px; }
.tab-insp { top: 60px; height: 39px; }
.tab-msg { top: 101px; height: 31px; }
.tab-lib { top: 134px; height: 26px; }

.pane {
  display: flex;
  flex-direction: column;
  flex: none;
}

.pane-sch {
  width: 467px;
}

.pane-pcb {
  width: 464px;
}

.doc-tabs {
  position: relative;
  display: flex;
  align-items: center;
  flex: none;
  height: 14px;
  background: #a8a8a8;
  white-space: nowrap;
}

.doc-tabs-pcb {
  padding-left: 1px;
  align-items: flex-end;
  border-bottom: 1px solid #e8e8e8;
}

.doc-tab {
  display: flex;
  align-items: center;
  flex: none;
  font-size: 6px;
  color: #e4e4e4;
}

.pane-sch .doc-tab {
  width: 72.5px;
}

.pane-sch .doc-tab:first-child {
  width: 45px;
  margin-left: 3px;
}

.pane-sch .doc-tab:nth-child(3) {
  width: 75px;
}

.pane-sch .doc-tab:nth-child(5) {
  width: 75.5px;
}

.doc-tab-on {
  width: 51px;
  height: 12px;
  padding-left: 2px;
  background: #f0f0f0;
  color: #333;
}

.pin-dots {
  position: absolute;
  right: 0;
  top: 3px;
  font-size: 7px;
  color: #222;
}

.sch-body {
  display: flex;
  flex: 1;
  min-height: 0;
}

.sch-canvas {
  flex: none;
  width: 457px;
  height: 436px;
  background: linear-gradient(#dedede, #c3c3c3);
}

.wires path {
  fill: none;
  stroke: #1e2aa8;
  stroke-width: 1;
}

.net-red text {
  font-size: 3px;
  fill: #a03024;
}

.net-blue text {
  font-size: 2.8px;
  fill: #343a90;
}

.port-text {
  font-size: 2.6px;
  fill: #7a5a20;
}

.scroll-v {
  display: flex;
  flex-direction: column;
  justify-content: space-between;
  align-items: center;
  flex: none;
  width: 10px;
  background: #eceef1;
  border-right: 1px solid #d0d0d0;
}

.arr {
  font-size: 5px;
  color: #666;
}

.scroll-h {
  display: flex;
  align-items: center;
  flex: none;
  height: 9px;
  padding: 0 2px;
  background: #f0f0f0;
}

.thumb {
  flex: 1;
  height: 7px;
  margin: 0 12px 0 14px;
  background: linear-gradient(#f6f6f6, #d8dadc);
  border: 1px solid #ccc;
}

.editor-bar,
.layer-bar {
  display: flex;
  align-items: center;
  flex: none;
  height: 11px;
  background: #f0f0f0;
  font-size: 6px;
  white-space: nowrap;
}

.editor-label {
  margin-left: 4px;
  width: 19px;
  font-weight: bold;
  color: #333;
}

.editor-tab {
  width: 45px;
  height: 10px;
  line-height: 10px;
  padding-left: 3px;
  background: #fff;
}

.bar-right {
  display: flex;
  align-items: center;
  margin-left: auto;
  margin-right: 2px;
}

.filter-icon {
  flex: none;
  width: 13px;
  font-size: 6px;
  color: #3a7ab8;
  border-left: 1px dotted #d0b030;
  padding-left: 1px;
}

.bar-right .filter-icon {
  margin-right: 4px;
}

.filter-icon-pcb {
  margin-left: 1px;
  margin-right: 1px;
}

.bar-btn {
  flex: none;
  padding: 0 1px;
  margin-left: 1px;
  color: #444;
  background: #e4e4e4;
  height: 10px;
  line-height: 10px;
}

.bar-btn-dim {
  color: #8a8a8a;
}

.pcb-body {
  position: relative;
  flex: 1;
  min-height: 0;
}

.pcb-canvas {
  display: block;
  width: 464px;
  height: 444px;
  background: #6c6967;
}

.ratsnest path {
  fill: none;
  stroke: #b8b890;
  stroke-width: 0.4;
  opacity: 0.7;
}

.readout {
  position: absolute;
  left: 1px;
  top: 0;
  width: 56px;
  height: 34px;
  padding: 3px 0 0 3px;
  background: linear-gradient(#0e1c26, #1d4762);
  border: 1px solid #0c1216;
}

.readout-xy {
  font-size: 6.2px;
  line-height: 7.5px;
  font-weight: bold;
  color: #d8d8c8;
}

.readout-layer {
  font-size: 8px;
  line-height: 9px;
  font-weight: bold;
  color: #f8f020;
}

.readout-snap {
  font-size: 4.8px;
  line-height: 7px;
  font-weight: bold;
  color: #aebcc6;
}

.layer-swatch {
  flex: none;
  width: 13px;
  height: 8px;
  margin-left: 1px;
  background: #f00;
}

.layer-count {
  flex: none;
  width: 10px;
  height: 8px;
  line-height: 7px;
  font-size: 5px;
  text-align: center;
  color: #666;
  background: #fff;
  border: 1px solid #bbb;
}

.layer-nav {
  flex: none;
  width: 9px;
  font-size: 6px;
  text-align: center;
  color: #555;
}

.layer-nav-first {
  margin-left: 1.5px;
}

.layer-tab {
  display: flex;
  align-items: center;
  flex: none;
  gap: 2px;
  height: 10px;
  padding-left: 3px;
  overflow: hidden;
  background: #fbfbfb;
  color: #555;
  border-right: 1px solid #e4e4e4;
}

.layer-tab-on {
  margin-left: 2.5px;
  background: #d4d4d4;
  color: #222;
  font-weight: bold;
}

.lw-23 { width: 23px; }
.lw-26 { width: 26px; }
.lw-28 { width: 28px; }
.lw-30 { width: 30px; }
.lw-31 { width: 31px; }
.lw-32 { width: 32px; }
.lw-34 { width: 34px; }
.lw-35 { width: 35px; }

.dot {
  flex: none;
  width: 5px;
  height: 5px;
}

.c-top { background: #f00; }
.c-bottom { background: #00f; }
.c-mech { background: #f0f; }
.c-mech15 { background: #008000; }
.c-tsilk { background: #ff0; }
.c-bsilk { background: #808000; }
.c-tpaste { background: #808080; }
.c-bpaste { background: #800000; }
.c-tsolder { background: #800080; }

/* status bar */
.statusbar {
  position: relative;
  display: flex;
  align-items: center;
  flex: 1;
  padding-left: 3px;
  background: #f0f0f0;
  font-size: 5.6px;
  white-space: nowrap;
}

.status-pos {
  color: #444;
}

.status-div {
  position: absolute;
  top: 1px;
  bottom: 0;
  width: 1px;
  background: #d0d0d0;
}

.status-div-1 { left: 245px; }
.status-div-2 { left: 488px; }

.status-system {
  position: absolute;
  left: 830px;
  top: 1px;
  width: 22px;
  height: 10px;
  line-height: 10px;
  text-align: center;
  color: #666;
  background: #e8e8e8;
}

.tray {
  position: absolute;
  right: 0;
  top: -1px;
  display: flex;
  align-items: center;
  width: 104px;
  height: 13px;
  padding-left: 1px;
  background: #fff;
}

.tray-ico {
  flex: none;
  width: 9px;
  height: 9px;
  margin-right: 2.6px;
}
```
